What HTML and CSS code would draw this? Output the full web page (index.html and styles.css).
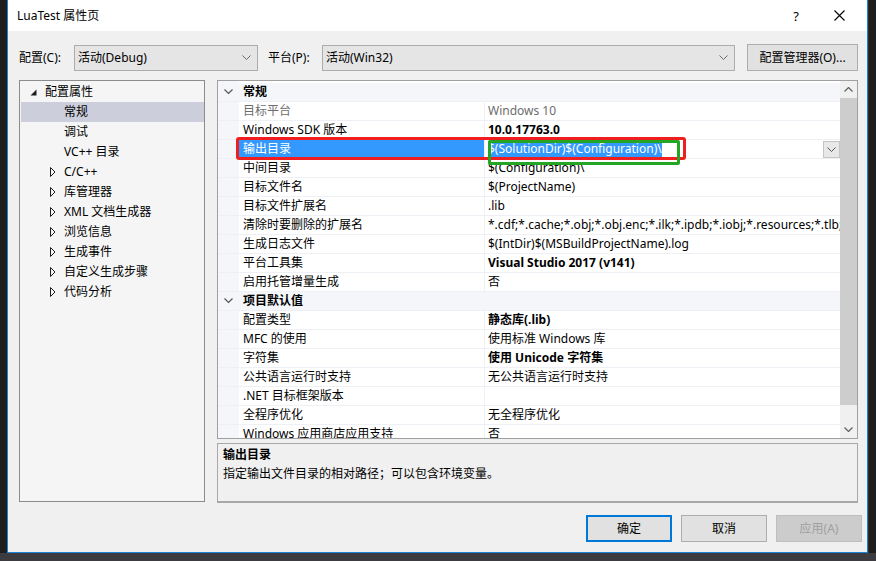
FILE: index.html
```html
<!DOCTYPE html>
<html lang="zh-CN">
  <head>
    <meta charset="utf-8">
    <title>LuaTest 属性页</title>
    <link rel="stylesheet" href="styles.css">
  </head>
  <body>
    <div class="screen">
      <div class="desk">
        <div class="editor-edge"></div>

        <div class="dialog">
          <div class="titlebar">
            <span class="title">LuaTest 属性页</span>
            <span class="caption-btn help">?</span>
            <span class="caption-btn close">
              <svg width="11" height="11" viewBox="0 0 11 11"><path d="M0.5 0.5 L10.5 10.5 M10.5 0.5 L0.5 10.5" stroke="#000" stroke-width="1.1" fill="none"/></svg>
            </span>
          </div>

          <div class="content">
            <!-- configuration / platform selectors -->
            <div class="config-row">
              <label class="config-label">配置(C):</label>
              <div class="combo combo-config">
                <span>活动(Debug)</span>
                <svg class="combo-arrow" width="9" height="5" viewBox="0 0 9 5"><path d="M0.5 0.5 L4.5 4.5 L8.5 0.5" stroke="#6a6a6a" fill="none"/></svg>
              </div>
              <label class="config-label platform-label">平台(P):</label>
              <div class="combo combo-platform">
                <span>活动(Win32)</span>
                <svg class="combo-arrow" width="9" height="5" viewBox="0 0 9 5"><path d="M0.5 0.5 L4.5 4.5 L8.5 0.5" stroke="#6a6a6a" fill="none"/></svg>
              </div>
              <button class="btn manager-btn">配置管理器(O)...</button>
            </div>

            <div class="main">
              <!-- page tree -->
              <div class="tree">
                <div class="node root">
                  <span class="twisty"><svg width="7" height="7" viewBox="0 0 7 7"><path d="M6.5 0.5 V6.5 H0.5 Z" fill="#1e1e1e"/></svg></span>
                  <span>配置属性</span>
                </div>
                <div class="node child selected"><span class="twisty"></span><span>常规</span></div>
                <div class="node child"><span class="twisty"></span><span>调试</span></div>
                <div class="node child"><span class="twisty"></span><span>VC++ 目录</span></div>
                <div class="node child"><span class="twisty"><svg width="6" height="10" viewBox="0 0 6 10"><path d="M0.5 0.5 L5 5 L0.5 9.5 Z" stroke="#1e1e1e" fill="none"/></svg></span><span>C/C++</span></div>
                <div class="node child"><span class="twisty"><svg width="6" height="10" viewBox="0 0 6 10"><path d="M0.5 0.5 L5 5 L0.5 9.5 Z" stroke="#1e1e1e" fill="none"/></svg></span><span>库管理器</span></div>
                <div class="node child"><span class="twisty"><svg width="6" height="10" viewBox="0 0 6 10"><path d="M0.5 0.5 L5 5 L0.5 9.5 Z" stroke="#1e1e1e" fill="none"/></svg></span><span>XML 文档生成器</span></div>
                <div class="node child"><span class="twisty"><svg width="6" height="10" viewBox="0 0 6 10"><path d="M0.5 0.5 L5 5 L0.5 9.5 Z" stroke="#1e1e1e" fill="none"/></svg></span><span>浏览信息</span></div>
                <div class="node child"><span class="twisty"><svg width="6" height="10" viewBox="0 0 6 10"><path d="M0.5 0.5 L5 5 L0.5 9.5 Z" stroke="#1e1e1e" fill="none"/></svg></span><span>生成事件</span></div>
                <div class="node child"><span class="twisty"><svg width="6" height="10" viewBox="0 0 6 10"><path d="M0.5 0.5 L5 5 L0.5 9.5 Z" stroke="#1e1e1e" fill="none"/></svg></span><span>自定义生成步骤</span></div>
                <div class="node child"><span class="twisty"><svg width="6" height="10" viewBox="0 0 6 10"><path d="M0.5 0.5 L5 5 L0.5 9.5 Z" stroke="#1e1e1e" fill="none"/></svg></span><span>代码分析</span></div>
              </div>

              <div class="pane">
                <!-- property grid -->
                <div class="grid">
                  <div class="rows">
                    <div class="row category">
                      <span class="gutter"><svg width="9" height="6" viewBox="0 0 9 6"><path d="M0.5 0.5 L4.5 4.5 L8.5 0.5" stroke="#555" stroke-width="1.2" fill="none"/></svg></span>
                      <span class="name">常规</span>
                    </div>
                    <div class="row readonly"><span class="gutter"></span><span class="name">目标平台</span><span class="value">Windows 10</span></div>
                    <div class="row"><span class="gutter"></span><span class="name">Windows SDK 版本</span><span class="value strong">10.0.17763.0</span></div>
                    <div class="row active">
                      <span class="gutter"></span><span class="name">输出目录</span>
                      <span class="value"><span class="text-sel">$(SolutionDir)$(Configuration)\</span>
                        <span class="drop-btn"><svg width="9" height="5" viewBox="0 0 9 5"><path d="M0.5 0.5 L4.5 4.5 L8.5 0.5" stroke="#555" fill="none"/></svg></span>
                      </span>
                    </div>
                    <div class="row"><span class="gutter"></span><span class="name">中间目录</span><span class="value">$(Configuration)\</span></div>
                    <div class="row"><span class="gutter"></span><span class="name">目标文件名</span><span class="value">$(ProjectName)</span></div>
                    <div class="row"><span class="gutter"></span><span class="name">目标文件扩展名</span><span class="value">.lib</span></div>
                    <div class="row"><span class="gutter"></span><span class="name">清除时要删除的扩展名</span><span class="value">*.cdf;*.cache;*.obj;*.obj.enc;*.ilk;*.ipdb;*.iobj;*.resources;*.tlb;*.tli;*.tlh;*.tmp;*.rsp</span></div>
                    <div class="row"><span class="gutter"></span><span class="name">生成日志文件</span><span class="value">$(IntDir)$(MSBuildProjectName).log</span></div>
                    <div class="row"><span class="gutter"></span><span class="name">平台工具集</span><span class="value strong">Visual Studio 2017 (v141)</span></div>
                    <div class="row"><span class="gutter"></span><span class="name">启用托管增量生成</span><span class="value">否</span></div>
                    <div class="row category">
                      <span class="gutter"><svg width="9" height="6" viewBox="0 0 9 6"><path d="M0.5 0.5 L4.5 4.5 L8.5 0.5" stroke="#555" stroke-width="1.2" fill="none"/></svg></span>
                      <span class="name">项目默认值</span>
                    </div>
                    <div class="row"><span class="gutter"></span><span class="name">配置类型</span><span class="value strong">静态库(.lib)</span></div>
                    <div class="row"><span class="gutter"></span><span class="name">MFC 的使用</span><span class="value">使用标准 Windows 库</span></div>
                    <div class="row"><span class="gutter"></span><span class="name">字符集</span><span class="value strong">使用 Unicode 字符集</span></div>
                    <div class="row"><span class="gutter"></span><span class="name">公共语言运行时支持</span><span class="value">无公共语言运行时支持</span></div>
                    <div class="row"><span class="gutter"></span><span class="name">.NET 目标框架版本</span><span class="value"></span></div>
                    <div class="row"><span class="gutter"></span><span class="name">全程序优化</span><span class="value">无全程序优化</span></div>
                    <div class="row"><span class="gutter"></span><span class="name">Windows 应用商店应用支持</span><span class="value">否</span></div>
                  </div>

                  <div class="scrollbar">
                    <span class="sb-arrow"><svg width="9" height="5" viewBox="0 0 9 5"><path d="M0.5 4.5 L4.5 0.5 L8.5 4.5" stroke="#606060" stroke-width="1.2" fill="none"/></svg></span>
                    <span class="sb-thumb"></span>
                    <span class="sb-track"></span>
                    <span class="sb-arrow"><svg width="9" height="5" viewBox="0 0 9 5"><path d="M0.5 0.5 L4.5 4.5 L8.5 0.5" stroke="#606060" stroke-width="1.2" fill="none"/></svg></span>
                  </div>

                  <!-- markers drawn over the output directory row -->
                  <span class="mark mark-red"></span>
                  <span class="mark mark-green"></span>
                </div>

                <div class="desc">
                  <div class="desc-title">输出目录</div>
                  <div class="desc-text">指定输出文件目录的相对路径；可以包含环境变量。</div>
                </div>
              </div>
            </div>

            <div class="buttons">
              <button class="btn dlg-btn default">确定</button>
              <button class="btn dlg-btn">取消</button>
              <button class="btn dlg-btn disabled">应用(A)</button>
            </div>
          </div>
        </div>

        <div class="editor-edge right"></div>
      </div>
      <div class="statusbar"></div>
    </div>
  </body>
</html>
```

FILE: styles.css
```css
html, body { margin: 0; padding: 0; }
body {
  width: 876px;
  height: 561px;
  overflow: hidden;
  background: #1e1e1e;
  font-family: "Noto Sans", "Noto Sans CJK SC", sans-serif;
  font-size: 12px;
  color: #000;
}

.screen { display: flex; flex-direction: column; height: 561px; }
.desk { display: flex; height: 553px; }
.editor-edge { width: 7px; background: #1e1e1e; }
.editor-edge.right { flex: 1; border-left: 1px solid #2d2d30; }
.statusbar { flex: 1; background: #3c3c40; }

/* window frame */
.dialog {
  width: 859px;
  height: 552px;
  border: 1px solid #1883d7;
  border-top: 0;
  background: #f0f0f0;
  display: flex;
  flex-direction: column;
}
.titlebar {
  height: 31px;
  background: #fff;
  display: flex;
  align-items: center;
}
.title { padding-left: 9px; line-height: 18px; flex: 1; }
.caption-btn {
  width: 46px;
  height: 31px;
  display: flex;
  align-items: center;
  justify-content: center;
}
.help { font-size: 13px; margin-right: -2px; }
.close { width: 44px; margin-right: 6px; }

.content {
  flex: 1;
  display: flex;
  flex-direction: column;
  padding: 13px 9px 0 11px;
}

/* selectors row */
.config-row { display: flex; align-items: center; height: 27px; }
.config-label { width: 55px; line-height: 18px; }
.platform-label { margin-left: 10px; width: 54px; }
.combo {
  box-sizing: border-box;
  height: 26px;
  background: #e5e5e5;
  border: 1px solid #acacac;
  display: flex;
  align-items: center;
  padding: 0 6px 0 3px;
  line-height: 18px;
}
.combo span { flex: 1; }
.combo-config { width: 184px; }
.combo-platform { width: 413px; }
.combo-arrow { margin-right: 0; }

.btn {
  font: inherit;
  color: #000;
  background: #e1e1e1;
  border: 1px solid #adadad;
  box-sizing: border-box;
  padding: 0;
  line-height: 18px;
}
.manager-btn { margin-left: auto; width: 111px; height: 27px; }

.main { display: flex; gap: 12px; margin-top: 9px; height: 423px; }

/* page tree */
.tree {
  box-sizing: border-box;
  width: 186px;
  height: 422px;
  border: 1px solid #8c8c8c;
  background: #f5f5f5;
  padding-top: 1px;
}
.node { display: flex; align-items: center; height: 20px; line-height: 20px; }
.node.root { padding-left: 10px; }
.node.root .twisty { width: 15px; }
.node.child { padding-left: 30px; }
.node.child .twisty { width: 14px; }
.twisty { display: flex; align-items: center; height: 20px; }
.node.selected { background: #cccedb; margin-left: 1px; padding-left: 29px; }

.pane { display: flex; flex-direction: column; width: 641px; }

/* property grid */
.grid {
  position: relative;
  box-sizing: border-box;
  height: 359px;
  border: 1px solid #a0a0a0;
  background: #fff;
  display: flex;
  overflow: hidden;
}
.rows { flex: 1; overflow: hidden; padding-top: 2px; background: linear-gradient(#f5f6fa, #f5f6fa) 0 0 / 21px 100% no-repeat; }
.row {
  display: flex;
  height: 18px;
  line-height: 18px;
  border-bottom: 1px solid #eef0f5;
  white-space: nowrap;
}
.gutter {
  width: 21px;
  flex: none;
  background: #f5f6fa;
  display: flex;
  align-items: center;
  justify-content: center;
}
.name {
  width: 241px;
  flex: none;
  padding-left: 4px;
  border-right: 1px solid #eef0f5;
  overflow: hidden;
}
.value {
  flex: 1;
  padding-left: 3px;
  overflow: hidden;
  display: flex;
  align-items: center;
}
.strong { font-weight: bold; }
.readonly .name, .readonly .value { color: #6d6d6d; }

.category { background: #f5f6fa; }
.category .name { font-weight: bold; border-right: 0; width: auto; }

.active .name { background: #3399ff; color: #fff; }
.text-sel {
  background: #3399ff;
  color: #fff;
  line-height: 16px;
}
.drop-btn {
  margin-left: auto;
  box-sizing: border-box;
  width: 17px;
  height: 17px;
  background: #e8e8e8;
  border: 1px solid #c4c4c4;
  display: flex;
  align-items: center;
  justify-content: center;
}

.scrollbar {
  width: 17px;
  flex: none;
  background: #f0f0f0;
  display: flex;
  flex-direction: column;
}
.sb-arrow { height: 17px; display: flex; align-items: center; justify-content: center; }
.sb-thumb { height: 307px; background: #cdcdcd; }
.sb-track { flex: 1; }

.mark { position: absolute; box-sizing: border-box; border-radius: 3px; }
.mark-red { left: 18px; top: 56px; width: 450px; height: 23px; border: 3px solid #f01e1e; }
.mark-green { left: 270px; top: 59px; width: 192px; height: 25px; border: 3px solid #23a623; border-radius: 2px; }

/* description panel */
.desc {
  box-sizing: border-box;
  margin-top: 4px;
  height: 60px;
  border: 1px solid #a8a8a8;
  border-bottom-width: 2px;
  background: #f0f0f0;
  padding: 1px 5px 0;
  line-height: 19px;
}
.desc-title { font-weight: bold; }

/* dialog buttons */
.buttons {
  display: flex;
  justify-content: flex-end;
  gap: 9px;
  margin-top: 12px;
  margin-right: -4px;
}
.dlg-btn { width: 86px; height: 27px; }
.dlg-btn.default { border: 2px solid #0078d7; }
.dlg-btn.disabled { background: #cccccc; border-color: #bfbfbf; color: #a0a0a0; }
```
